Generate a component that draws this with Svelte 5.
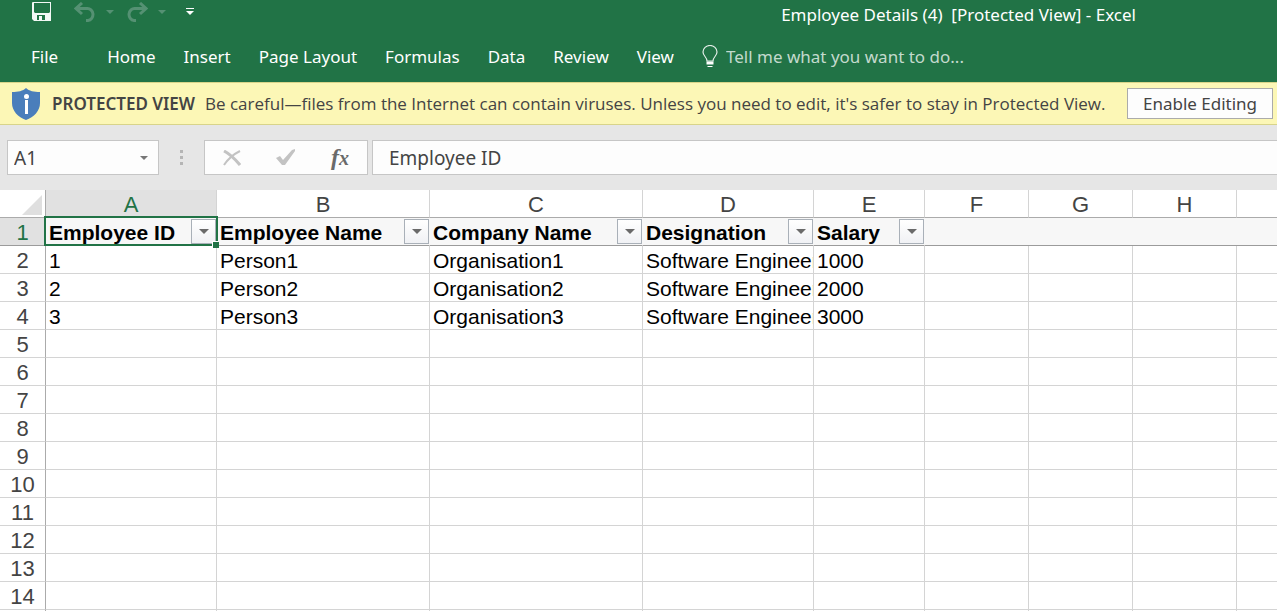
<script>
    const tabs = ['Home', 'Insert', 'Page Layout', 'Formulas', 'Data', 'Review', 'View'];
    const columns = [
        { name: 'A', width: 171 },
        { name: 'B', width: 213 },
        { name: 'C', width: 213 },
        { name: 'D', width: 171 },
        { name: 'E', width: 111 },
        { name: 'F', width: 104 },
        { name: 'G', width: 104 },
        { name: 'H', width: 104 },
    ];
    const headings = ['Employee ID', 'Employee Name', 'Company Name', 'Designation', 'Salary'];
    const records = [
        ['1', 'Person1', 'Organisation1', 'Software Engineer', '1000'],
        ['2', 'Person2', 'Organisation2', 'Software Engineer', '2000'],
        ['3', 'Person3', 'Organisation3', 'Software Engineer', '3000'],
    ];
    const lastRow = 15;
    const rows = Array.from({ length: lastRow - 1 }, (_, i) => ({
        number: i + 2,
        cells: records[i] || [],
    }));

    let cellName = $state('A1');
    let formula = $state('Employee ID');
    let search = $state('');
</script>

<div class="app">
    <header>
        <div class="titlebar">
            <div class="quick">
                <button class="save" aria-label="Save">
                    <svg width="20" height="20" viewBox="0 0 20 20">
                        <path d="M0 1q0-1 1-1h18v19H2l-2-2z" fill="#f3f8f5" />
                        <path d="M2 1h16v9l-1 1H3l-1-1z" fill="#217346" />
                        <path d="M5 13h8v5h-3v-4H7v4H5z" fill="#217346" />
                    </svg>
                </button>
                <button class="undo" aria-label="Undo">
                    <svg width="22" height="20" viewBox="0 0 22 20">
                        <path d="M8 1L2 6.500l6 5.500M2 6.500h11a5 5.500 0 0 1 1 12h-2" fill="none" stroke="#559173" stroke-width="3" />
                    </svg>
                </button>
                <button class="more" aria-label="Undo list"><i class="arrow"></i></button>
                <button class="undo" aria-label="Redo">
                    <svg width="22" height="20" viewBox="0 0 22 20">
                        <path d="M14 1l6 5.500-6 5.500M20 6.500H9a5 5.500 0 0 0-1 12h2" fill="none" stroke="#559173" stroke-width="3" />
                    </svg>
                </button>
                <button class="more" aria-label="Redo list"><i class="arrow"></i></button>
                <button class="customize" aria-label="Customize toolbar">
                    <svg width="8" height="8" viewBox="0 0 8 8" fill="#fff">
                        <path d="M0 0h8v1H0zM0 3h8L4 7z" />
                    </svg>
                </button>
            </div>
            <div class="title">Employee Details (4)&nbsp; [Protected View] - Excel</div>
        </div>
        <nav>
            <button class="file">File</button>
            {#each tabs as tab}
                <button>{tab}</button>
            {/each}
            <label class="tell">
                <svg width="16" height="23" viewBox="0 0 16 23" fill="none" stroke="#e4efe9">
                    <path d="M5 16c0-4-4-5-4-9a7 6.500 0 0 1 14 0c0 4-4 5-4 9z" stroke-width="1.200" />
                    <path d="M4.500 18h7" stroke="#fff" stroke-width="3" />
                    <path d="M5.500 21.500h5" stroke="#fff" />
                </svg>
                <input aria-label="Tell me" placeholder="Tell me what you want to do..." bind:value={search} />
            </label>
        </nav>
    </header>

    <div class="notice">
        <svg width="28" height="32" viewBox="0 0 28 32">
            <path d="M14 0c3 3 8 4 14 4v11c0 8-6 14-14 17C6 29 0 23 0 15V4c6 0 11-1 14-4z" fill="#4a7ebb" />
            <circle cx="14.500" cy="8.500" r="2.500" fill="#fff" />
            <path d="M13 12h3v14h-3z" fill="#fff" />
        </svg>
        <strong>PROTECTED VIEW</strong>
        <span>Be careful—files from the Internet can contain viruses. Unless you need to edit, it's safer to stay in Protected View.</span>
        <button>Enable Editing</button>
    </div>

    <div class="formula-bar">
        <div class="box name-box">
            <input aria-label="Name box" bind:value={cellName} />
            <button aria-label="Cell names"><i class="arrow"></i></button>
        </div>
        <div class="grip"><i></i><i></i><i></i></div>
        <div class="box actions">
            <button aria-label="Cancel">
                <svg width="18" height="16" viewBox="0 0 18 16" fill="none" stroke="#c3c3c3">
                    <path d="M1 1c6 3 11 8 16 14" stroke-width="3" />
                    <path d="M17 1C11 4 5 9 1 15" stroke-width="2" />
                </svg>
            </button>
            <button aria-label="Enter">
                <svg width="20" height="17" viewBox="0 0 20 17">
                    <path d="M0 9l4-2 3 4L16 1l3-1v2L9 16H6z" fill="#c3c3c3" />
                </svg>
            </button>
            <button class="fx" aria-label="Insert function">f<small>x</small></button>
        </div>
        <div class="box formula">
            <input aria-label="Formula" bind:value={formula} />
        </div>
    </div>

    <main>
        <table>
            <colgroup>
                <col class="numbers" />
                {#each columns as column}
                    <col style="width: {column.width}px" />
                {/each}
                <col />
            </colgroup>
            <thead>
                <tr>
                    <th class="corner" aria-label="Select all">
                        <svg width="20" height="20" viewBox="0 0 20 20"><path d="M20 0v20H0z" fill="#dfdfdf" /></svg>
                    </th>
                    {#each columns as column, i}
                        <th class:active={i === 0}>{column.name}</th>
                    {/each}
                    <th></th>
                </tr>
            </thead>
            <tbody>
                <tr class="first">
                    <th class="active">1</th>
                    {#each headings as heading, i}
                        <td class:selected={i === 0}>
                            <div class="heading">
                                <span>{heading}</span>
                                <button class="filter" aria-label="Filter {heading}"><i class="arrow"></i></button>
                            </div>
                        </td>
                    {/each}
                    <td colspan={columns.length - headings.length + 1}></td>
                </tr>
                {#each rows as row}
                    <tr>
                        <th>{row.number}</th>
                        {#each columns as _, i}
                            <td>{row.cells[i] || ''}</td>
                        {/each}
                        <td></td>
                    </tr>
                {/each}
            </tbody>
        </table>
    </main>
</div>

<style>
    :global(body) {
        margin: 0;
        background: #fff;
    }
    .app {
        height: 100vh;
        display: flex;
        flex-direction: column;
        overflow: hidden;
        font-family: "Noto Sans", "Segoe UI", sans-serif;
        font-size: 17px;
        color: #444;
    }
    button,
    input {
        margin: 0;
        padding: 0;
        border: 0;
        background: none;
        font: inherit;
        color: inherit;
    }
    button {
        white-space: nowrap;
    }
    input {
        min-width: 0;
        outline: none;
    }
    svg {
        display: block;
        flex: none;
    }
    .arrow {
        display: block;
        border: 4px solid transparent;
        border-top-color: #777;
        border-bottom: 0;
    }

    header {
        background: #217346;
        color: #fff;
    }
    .titlebar {
        display: flex;
        justify-content: space-between;
        height: 32px;
    }
    .quick {
        display: flex;
        height: 24px;
        align-items: center;
        padding-left: 32px;
    }
    .quick .arrow {
        border-top-color: #559173;
    }
    .save {
        margin-right: 22px;
    }
    .more {
        padding: 0 12px 0 10px;
    }
    .customize {
        padding-left: 8px;
    }
    .title {
        padding-right: 141px;
        line-height: 30px;
    }
    nav {
        display: flex;
        align-items: center;
        gap: 28px;
        height: 48px;
        padding: 0 0 2px 31px;
    }
    .file {
        margin-right: 21px;
    }
    .tell {
        display: flex;
        flex: 1;
        align-items: center;
        gap: 8px;
    }
    .tell input {
        flex: 1;
    }
    .tell input::placeholder {
        color: #c3dacd;
        opacity: 1;
    }

    .notice {
        display: flex;
        align-items: center;
        height: 41px;
        padding: 0 4px 0 12px;
        border: solid #d8d48a;
        border-width: 1px 0;
        background: #fcf7b6;
        white-space: nowrap;
    }
    .notice strong {
        margin: 0 10px 0 12px;
        font-weight: 600;
    }
    .notice span {
        flex: 1;
        font-family: "Open Sans", "Segoe UI", sans-serif;
    }
    .notice button {
        width: 146px;
        height: 31px;
        border: 1px solid #ababab;
        background: #fdfdfd;
    }

    .formula-bar {
        display: flex;
        padding: 15px 0 15px 7px;
        background: #e6e6e6;
        font-size: 19px;
    }
    .box {
        display: flex;
        align-items: center;
        box-sizing: border-box;
        height: 35px;
        border: 1px solid #c6c6c6;
        background: #fdfdfd;
    }
    .name-box {
        width: 152px;
        padding: 0 10px 0 6px;
    }
    .name-box input {
        flex: 1;
    }
    .grip {
        display: flex;
        flex-direction: column;
        justify-content: center;
        gap: 3px;
        width: 45px;
        align-items: center;
    }
    .grip i {
        width: 3px;
        height: 3px;
        background: #b5b5b5;
    }
    .actions {
        justify-content: space-between;
        width: 164px;
        margin-right: 4px;
        padding: 0 18px;
    }
    .fx {
        font: italic bold 24px/24px "Liberation Serif", serif;
        color: #6a6a6a;
    }
    .fx small {
        font-size: 20px;
    }
    .formula {
        flex: 1;
        border-right: 0;
        padding-left: 16px;
    }
    .formula input {
        flex: 1;
    }

    main {
        flex: 1;
        min-height: 0;
        overflow: hidden;
        font-family: "Liberation Sans", Arial, sans-serif;
        font-size: 22px;
        line-height: 25px;
    }
    table {
        width: 100%;
        table-layout: fixed;
        border-spacing: 0;
    }
    .numbers {
        width: 46px;
    }
    th,
    td {
        box-sizing: border-box;
        height: 28px;
        padding: 2px 0 0;
        border: solid #d4d4d4;
        border-width: 0 1px 1px 0;
        white-space: nowrap;
    }
    th:last-child,
    td:last-child {
        border-right: 0;
    }
    th {
        font-weight: normal;
        color: #444;
    }
    td {
        padding-left: 3px;
        overflow: hidden;
        font-size: 21px;
        color: #000;
    }
    thead th {
        border-bottom-color: #ababab;
    }
    tbody th,
    .corner {
        border-right-color: #ababab;
    }
    .corner svg {
        margin-left: 22px;
    }
    th.active {
        background: #e1e1e1;
        color: #217346;
    }
    .first td {
        padding-top: 0;
        border-right-color: transparent;
        background: #f7f7f7;
    }
    .first th,
    .first td {
        border-bottom-color: #9b9b9b;
    }
    .heading {
        display: flex;
        align-items: center;
        justify-content: space-between;
        height: 27px;
        font-weight: bold;
    }
    .heading span {
        padding-top: 2px;
    }
    .filter {
        display: flex;
        align-items: center;
        justify-content: center;
        box-sizing: border-box;
        width: 25px;
        height: 25px;
        border: 1px solid #a9b0b8;
        background: linear-gradient(#fff, #f0f1f4);
    }
    .filter .arrow {
        border-width: 5px 5px 0;
        border-top-color: #6a6a6a;
    }
    .selected {
        position: relative;
        overflow: visible;
    }
    .selected::before {
        content: "";
        position: absolute;
        inset: -2px -2px -1px;
        border: 2px solid #217346;
        pointer-events: none;
    }
    .selected::after {
        content: "";
        position: absolute;
        right: -3px;
        bottom: -3px;
        width: 6px;
        height: 6px;
        background: #217346;
        box-shadow: -1px -1px #fff;
    }
</style>
